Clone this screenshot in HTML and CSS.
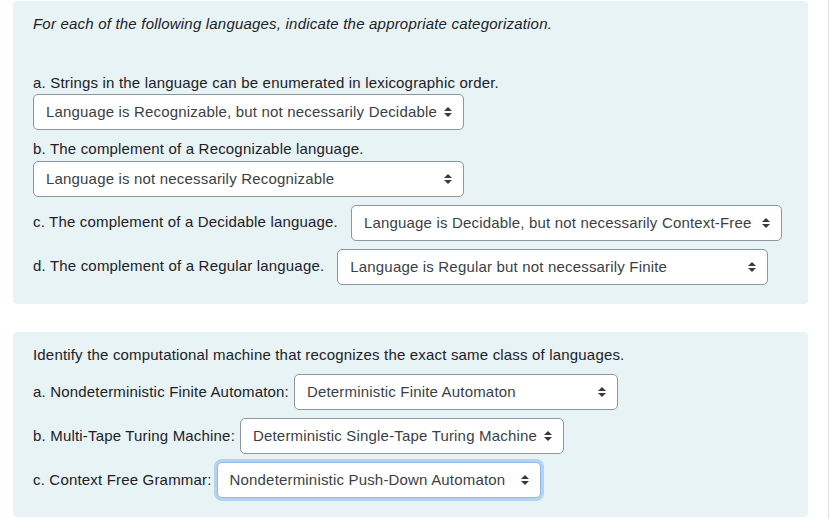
FILE: index.html
```html
<!DOCTYPE html>
<html lang="en">
<head>
    <meta charset="UTF-8">
    <meta name="viewport" content="width=device-width, initial-scale=1.0">
    <title>Quiz</title>
    <link rel="stylesheet" href="styles.css">
</head>
<body>
    <div class="page">
        <div class="formulation">
            <p class="qtext"><em>For each of the following languages, indicate the appropriate categorization.</em></p>
            <div class="stacked">
                <div class="prompt">a. Strings in the language can be enumerated in lexicographic order.</div>
                <span class="select-wrap wide">
                    <select class="custom-select">
                        <option>Language is Recognizable, but not necessarily Decidable</option>
                    </select>
                    <svg class="caret" viewBox="0 0 4 5"><path d="M2 0L0 2h4zm0 5L0 3h4z"/></svg>
                </span>
            </div>
            <div class="stacked">
                <div class="prompt">b. The complement of a Recognizable language.</div>
                <span class="select-wrap wide">
                    <select class="custom-select">
                        <option>Language is not necessarily Recognizable</option>
                    </select>
                    <svg class="caret" viewBox="0 0 4 5"><path d="M2 0L0 2h4zm0 5L0 3h4z"/></svg>
                </span>
            </div>
            <div class="inline-row">
                <span class="prompt">c. The complement of a Decidable language.</span>
                <span class="select-wrap wide">
                    <select class="custom-select">
                        <option>Language is Decidable, but not necessarily Context-Free</option>
                    </select>
                    <svg class="caret" viewBox="0 0 4 5"><path d="M2 0L0 2h4zm0 5L0 3h4z"/></svg>
                </span>
            </div>
            <div class="inline-row">
                <span class="prompt">d. The complement of a Regular language.</span>
                <span class="select-wrap wide">
                    <select class="custom-select">
                        <option>Language is Regular but not necessarily Finite</option>
                    </select>
                    <svg class="caret" viewBox="0 0 4 5"><path d="M2 0L0 2h4zm0 5L0 3h4z"/></svg>
                </span>
            </div>
        </div>

        <div class="formulation">
            <p class="qtext">Identify the computational machine that recognizes the exact same class of languages.</p>
            <div class="inline-row tight">
                <span class="prompt">a. Nondeterministic Finite Automaton:</span>
                <span class="select-wrap medium">
                    <select class="custom-select">
                        <option>Deterministic Finite Automaton</option>
                    </select>
                    <svg class="caret" viewBox="0 0 4 5"><path d="M2 0L0 2h4zm0 5L0 3h4z"/></svg>
                </span>
            </div>
            <div class="inline-row tight">
                <span class="prompt">b. Multi-Tape Turing Machine:</span>
                <span class="select-wrap medium">
                    <select class="custom-select">
                        <option>Deterministic Single-Tape Turing Machine</option>
                    </select>
                    <svg class="caret" viewBox="0 0 4 5"><path d="M2 0L0 2h4zm0 5L0 3h4z"/></svg>
                </span>
            </div>
            <div class="inline-row tight">
                <span class="prompt">c. Context Free Grammar:</span>
                <span class="select-wrap medium">
                    <select class="custom-select focused">
                        <option>Nondeterministic Push-Down Automaton</option>
                    </select>
                    <svg class="caret" viewBox="0 0 4 5"><path d="M2 0L0 2h4zm0 5L0 3h4z"/></svg>
                </span>
            </div>
        </div>
    </div>
</body>
</html>
```

FILE: styles.css
```css
:root {
    --body-color: #1d2125;
    --formulation-bg: #e7f3f5;
    --select-border: #8f959e;
}

body {
    margin: 0;
    font-family: "Liberation Sans", Arial, sans-serif;
    font-size: 15px;
    line-height: 1.5;
    letter-spacing: 0.18px;
    color: var(--body-color);
    background: #fff;
}

.page {
    width: 829px;
    min-height: 519px;
    border-right: 1px solid #e3e3e3;
    padding-top: 1px;
    box-sizing: border-box;
}

.formulation {
    background: var(--formulation-bg);
    border-radius: 4px;
    margin: 0 20px 28px 13px;
    padding: 12px 20px 19px;
}

.qtext {
    margin: 0 0 36px;
}

.qtext em {
    letter-spacing: 0.2px;
}

.formulation + .formulation .qtext {
    margin-bottom: 8px;
}

.stacked {
    margin-bottom: 8px;
}

.inline-row {
    display: flex;
    align-items: center;
    gap: 13px;
    margin-bottom: 8px;
}

.inline-row:last-child {
    margin-bottom: 0;
}

.inline-row.tight {
    gap: 5px;
}

.select-wrap {
    position: relative;
    display: inline-block;
}

.select-wrap.wide {
    width: 431px;
}

.select-wrap.medium {
    width: 324px;
}

.custom-select {
    appearance: none;
    -webkit-appearance: none;
    display: block;
    width: 100%;
    height: 36px;
    padding: 6px 20px 6px 12px;
    font-family: inherit;
    font-size: 15px;
    line-height: 22px;
    letter-spacing: inherit;
    color: #3a3f45;
    background: #fff;
    border: 1px solid var(--select-border);
    border-radius: 5px;
    box-sizing: border-box;
}

.custom-select.focused {
    border-color: #8fb8f0;
    box-shadow: 0 0 0 3px rgba(90, 150, 230, 0.35);
}

.caret {
    position: absolute;
    right: 12px;
    top: 13px;
    width: 8px;
    height: 10px;
    fill: #343a40;
    pointer-events: none;
}
```
